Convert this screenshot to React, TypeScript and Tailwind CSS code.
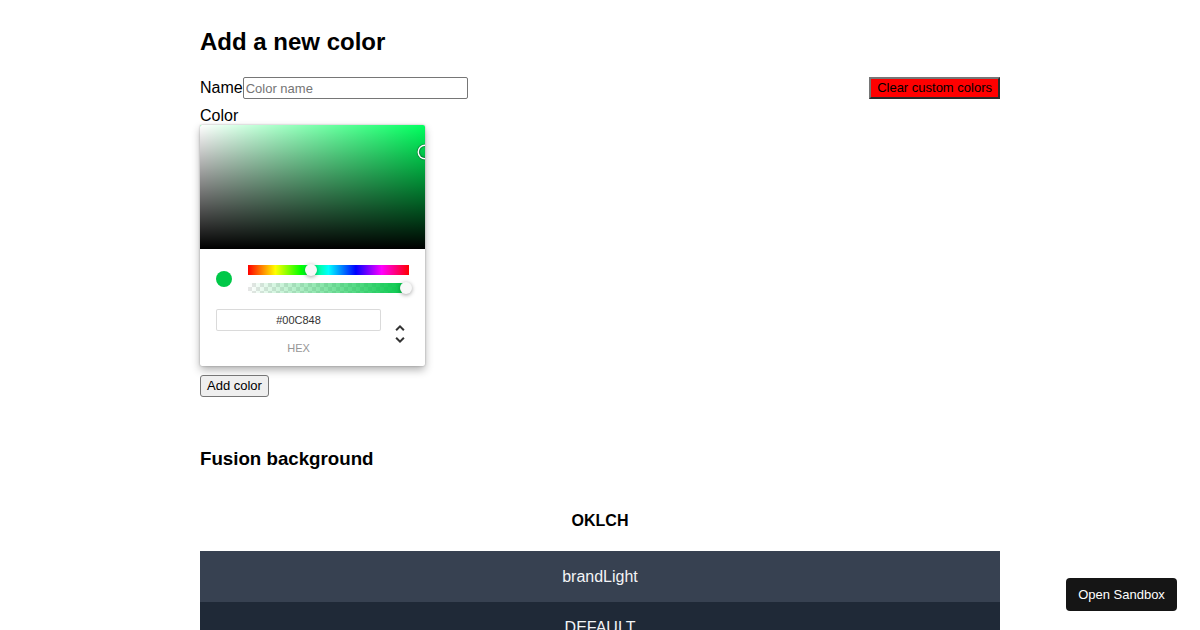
import React from "react";

const font = { fontFamily: '"Liberation Sans", Arial, sans-serif' };

function ChromePicker() {
  return (
    <div className="w-[225px] bg-white rounded-[2px] shadow-[0_0_2px_rgba(0,0,0,0.3),0_4px_8px_rgba(0,0,0,0.3)]">
      <div className="relative h-[124px] overflow-hidden rounded-t-[2px] bg-[hsl(142,100%,50%)]">
        <div className="absolute inset-0 bg-[linear-gradient(to_right,#fff,rgba(255,255,255,0))]" />
        <div className="absolute inset-0 bg-[linear-gradient(to_top,#000,rgba(0,0,0,0))]" />
        <div className="absolute left-full top-[21.6%] w-3 h-3 -translate-x-1/2 -translate-y-1/2 rounded-full shadow-[0_0_0_1.5px_#fff,inset_0_0_1px_1px_rgba(0,0,0,0.3),0_0_1px_2px_rgba(0,0,0,0.4)]" />
      </div>
      <div className="px-4 pt-4 pb-3">
        <div className="flex">
          <div className="w-8 shrink-0">
            <div className="mt-[6px] w-4 h-4 rounded-full bg-[#00C848]" />
          </div>
          <div className="flex-1">
            <div className="relative h-[10px] mb-2 bg-[linear-gradient(to_right,#f00_0%,#ff0_17%,#0f0_33%,#0ff_50%,#00f_67%,#f0f_83%,#f00_100%)]">
              <div className="absolute left-[39.4%] top-[-1px] w-3 h-3 -translate-x-1/2 rounded-full bg-[#f8f8f8] shadow-[0_1px_4px_rgba(0,0,0,0.37)]" />
            </div>
            <div className="relative h-[10px]">
              <div className="absolute inset-0 bg-white bg-[linear-gradient(45deg,#e6e6e6_25%,transparent_25%,transparent_75%,#e6e6e6_75%),linear-gradient(45deg,#e6e6e6_25%,transparent_25%,transparent_75%,#e6e6e6_75%)] bg-[length:8px_8px] bg-[position:0_0,4px_4px]" />
              <div className="absolute inset-0 bg-[linear-gradient(to_right,rgba(0,200,72,0),rgb(0,200,72))]" />
              <div className="absolute left-[98%] top-[-1px] w-3 h-3 -translate-x-1/2 rounded-full bg-[#f8f8f8] shadow-[0_1px_4px_rgba(0,0,0,0.37)]" />
            </div>
          </div>
        </div>
        <div className="flex pt-4">
          <div className="flex-1">
            <div className="h-[22px] rounded-[2px] shadow-[inset_0_0_0_1px_#dadada] text-[11px] text-[#333] flex items-center justify-center">
              #00C848
            </div>
            <div className="mt-3 text-[11px] leading-[11px] text-[#969696] text-center uppercase">hex</div>
          </div>
          <div className="w-[28px] relative">
            <svg viewBox="0 0 24 24" className="absolute right-[-4px] top-[12px] w-[26px] h-[26px] border border-transparent">
              <path fill="#333" d="M12,18.17L8.83,15L7.42,16.41L12,21L16.59,16.41L15.17,15M12,5.83L15.17,9L16.58,7.59L12,3L7.41,7.59L8.83,9L12,5.83Z" />
            </svg>
          </div>
        </div>
      </div>
    </div>
  );
}

export default function App() {
  return (
    <div className="min-h-[630px] bg-white text-black" style={font}>
      <div className="w-[800px] mx-auto pt-[26px]">
        <h2 className="text-2xl leading-8 font-bold">Add a new color</h2>
        <div className="mt-[19px] flex items-center justify-between">
          <div className="flex items-center">
            <span className="text-base leading-[22px]">Name</span>
            <input
              placeholder="Color name"
              className="w-[225px] h-[22px] border border-[#767676] rounded-[2px] px-[2px] text-[13px] placeholder:text-[#757575] outline-none"
              style={font}
            />
          </div>
          <button
            className="h-[22px] px-[6px] pb-[1px] bg-[#f00] text-[13px] border-2 border-t-[#767676] border-l-[#767676] border-b-[#2a2a2a] border-r-[#2a2a2a] leading-none"
            style={font}
          >
            Clear custom colors
          </button>
        </div>
        <div className="mt-[7px] text-base leading-[19px]">Color</div>
        <ChromePicker />
        <button
          className="mt-[9px] h-[22px] px-[6px] pb-[1px] bg-[#efefef] border border-[#767676] rounded-[3px] text-[13px] leading-none"
          style={font}
        >
          Add color
        </button>
        <h3 className="mt-[48px] text-[18.72px] leading-7 font-bold">Fusion background</h3>
        <div className="mt-[36px] text-center font-bold text-base leading-6">OKLCH</div>
        <div className="mt-[18px]">
          <div className="h-[51px] pt-[1px] bg-[#374151] text-[#f3f4f6] flex items-center justify-center text-base">brandLight</div>
          <div className="h-[51px] pt-[1px] bg-[#1f2937] text-[#f3f4f6] flex items-center justify-center text-base">DEFAULT</div>
        </div>
      </div>
      <button
        className="fixed right-[23px] bottom-[19px] w-[111px] h-[33px] rounded-[4px] bg-[#151515] text-white text-[13px]"
        style={font}
      >
        Open Sandbox
      </button>
    </div>
  );
}
